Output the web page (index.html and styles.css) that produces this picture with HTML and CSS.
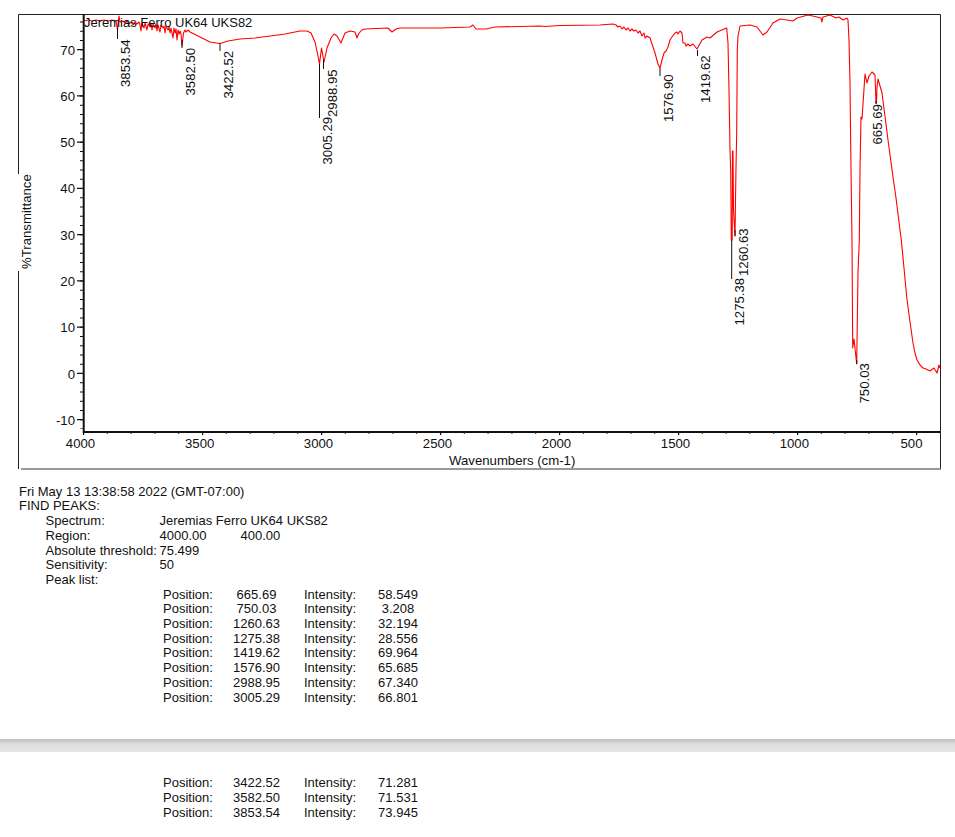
FILE: index.html
```html
<!DOCTYPE html>
<html lang="en">
<head>
    <meta charset="UTF-8">
    <title>Find Peaks Report</title>
    <link rel="stylesheet" href="styles.css">
</head>
<body>
    <!-- Spectrum plot: 46.25px per 10 %T, 119px per 500 cm-1 -->
    <svg class="chart" width="955" height="480" viewBox="0 0 955 480">
        <path class="frame" d="M18.5 174V14.5H940.5V469"/>
        <path class="frame" d="M18.5 271V469"/>
        <path class="frame-bottom" d="M21 469H941"/>

        <path class="axis" d="M83.7 14V432H940"/>
        <line class="tick-y" x1="81.5" y1="21.4" x2="81.5" y2="429"/>
        <line class="tick-y-major" x1="80" y1="49.1" x2="80" y2="429"/>
        <line class="tick-x" x1="83" y1="433" x2="940" y2="433"/>
        <line class="tick-x-major" x1="83" y1="433.5" x2="940" y2="433.5"/>

        <g class="y-labels">
            <text x="75" y="54.5">70</text>
            <text x="75" y="100.5">60</text>
            <text x="75" y="147">50</text>
            <text x="75" y="193">40</text>
            <text x="75" y="239.5">30</text>
            <text x="75" y="286">20</text>
            <text x="75" y="332">10</text>
            <text x="75" y="378.5">0</text>
            <text x="75" y="425">-10</text>
        </g>
        <g class="x-labels">
            <text x="80.5" y="447.5">4000</text>
            <text x="199.7" y="447.5">3500</text>
            <text x="318.5" y="447.5">3000</text>
            <text x="437.5" y="447.5">2500</text>
            <text x="556.5" y="447.5">2000</text>
            <text x="675.5" y="447.5">1500</text>
            <text x="794.3" y="447.5">1000</text>
            <text x="911.5" y="447.5">500</text>
        </g>
        <text class="label" x="449" y="465">Wavenumbers (cm-1)</text>
        <text class="label" transform="translate(31 269) rotate(-90)">%Transmittance</text>

        <polyline class="trace" points="84,21 88,20 92,21 96,20 100,21 104,20 108,21 112,20 116,21 117.5,30 118.5,20 119,16 120,22 123,21 125,23 127,21 129,24 131,22 133,25 135,22 137,24 139,22 140,25 141,31 142,23 144,28 145,23 147,30 148,24 150,27 151,23 152,30 153,24 155,28 156,24 157,31 158,25 160,32 161,25 163,28 164,26 165,33 166,26 168,30 169,27 170,33 171,28 173,38 174,28 175,33 176,29 177,40 178,30 179,34 180,31 181,34 182,46 183.5,33 185,30 186,32 188,30 190,32 192,33 200,37 210,42 220,43.5 228,41 240,39 255,38 270,36 285,34 300,31 307,31 311,33 315,42 318,56 319.5,64 321.5,48 324,62 327,48 331,38 334,34 337,36 341,43 345,33 350,31 355,32 357,38 358.5,34 361.7,30 365,29 388,28 392,32 396,29 400,28 440,28 470,27 473,25 476,29 480,29 486,29 495,27 540,26 545,26.5 560,25.5 600,25 606,24.5 613,24 616,25 618,27 620,26 622,29 624,27 626,30 628,28 630,31 632,29 634,31 636,30 638,33 640,31 642,36 644,33 645,38 647,36 650,38 655,53 658,64 660,68 662,60 664,53 666,51 668,47 670,40 672,37 675,33 677,32 678,34 680,31 682,33 683,43 685,43 686,46 688,44 690,46 693,44 697,49 702,40 707,37 710,38 717,32 726.7,28 728,43 729,90 730,150 730.7,170 731.3,240 732.2,240 732.5,151 733,151 733.5,210 735,236 735.5,200 736,167 736.7,133 737.3,50 738,36 740,26 750,25 757,27 763,35 767,32 773,23 780,19 787,20 793,21 797,18 808,15 817,17 821,18 822,22 823,17 830,15 836,18 839,17 843,20 847,18 848,20 849,40 850,83 851,170 852,240 852.7,348 854,339 856.7,364 858,273 859.3,240 860,170 861,117 862,119 865,74 867,83 869,76 872,72 875,75 876,103 876.5,103 877,87 878,79 882,93 888,140 893,177 896,198 899,222 901.3,240 904,268 906.7,297 910,322 913,343 915,353 917,360 920,365 923,368 926,369 930,371 934,368 937,373 939,365 940,368"/>

        <path class="peak-tick" d="M117.5 28V39M182 40V48M220 43V51M319.5 64V118M323.5 60V69M660 68V76M697.5 50V56M731.7 240V279M735 230V236M856.7 360V364M876 101V104"/>
        <g class="peak-labels">
            <text transform="translate(130 87) rotate(-90)">3853.54</text>
            <text transform="translate(195 95.5) rotate(-90)">3582.50</text>
            <text transform="translate(232.5 98.5) rotate(-90)">3422.52</text>
            <text transform="translate(332 164.5) rotate(-90)">3005.29</text>
            <text transform="translate(336.5 117) rotate(-90)">2988.95</text>
            <text transform="translate(672.5 122) rotate(-90)">1576.90</text>
            <text transform="translate(710 103) rotate(-90)">1419.62</text>
            <text transform="translate(743.5 325.5) rotate(-90)">1275.38</text>
            <text transform="translate(748 276) rotate(-90)">1260.63</text>
            <text transform="translate(869 403.5) rotate(-90)">750.03</text>
            <text transform="translate(881.5 144.5) rotate(-90)">665.69</text>
        </g>
        <text class="title" x="84" y="27">Jeremias Ferro UK64 UKS82</text>
    </svg>

    <section class="report">
        <p>Fri May 13 13:38:58 2022 (GMT-07:00)</p>
        <p>FIND PEAKS:</p>
        <div class="meta">
            <span>Spectrum:</span><span>Jeremias Ferro UK64 UKS82</span>
            <span>Region:</span><span class="region"><span>4000.00</span><span>400.00</span></span>
            <span>Absolute threshold:</span><span>75.499</span>
            <span>Sensitivity:</span><span>50</span>
            <span>Peak list:</span><span></span>
        </div>
        <div class="peaks">
            <span>Position:</span><span>665.69</span><span>Intensity:</span><span>58.549</span>
            <span>Position:</span><span>750.03</span><span>Intensity:</span><span>3.208</span>
            <span>Position:</span><span>1260.63</span><span>Intensity:</span><span>32.194</span>
            <span>Position:</span><span>1275.38</span><span>Intensity:</span><span>28.556</span>
            <span>Position:</span><span>1419.62</span><span>Intensity:</span><span>69.964</span>
            <span>Position:</span><span>1576.90</span><span>Intensity:</span><span>65.685</span>
            <span>Position:</span><span>2988.95</span><span>Intensity:</span><span>67.340</span>
            <span>Position:</span><span>3005.29</span><span>Intensity:</span><span>66.801</span>
        </div>
    </section>

    <div class="page-gap"></div>

    <section class="report">
        <div class="peaks">
            <span>Position:</span><span>3422.52</span><span>Intensity:</span><span>71.281</span>
            <span>Position:</span><span>3582.50</span><span>Intensity:</span><span>71.531</span>
            <span>Position:</span><span>3853.54</span><span>Intensity:</span><span>73.945</span>
        </div>
    </section>
</body>
</html>
```

FILE: styles.css
```css
* {
    box-sizing: border-box;
    margin: 0;
    padding: 0;
}

body {
    background: white;
    color: #111;
    font-family: "Liberation Sans", Arial, sans-serif;
    font-size: 13px;
    line-height: 14.7px;
}

.chart {
    display: block;
    margin-bottom: 4.7px;
}

.chart text {
    font-size: 13.2px;
    fill: #111;
}

.chart .title {
    font-size: 13px;
}

.frame {
    fill: none;
    stroke: #222;
    stroke-width: 1;
}

.frame-bottom {
    fill: none;
    stroke: #777;
    stroke-width: 1.6;
}

.axis {
    fill: none;
    stroke: #111;
    stroke-width: 2;
}

.tick-y {
    stroke: #111;
    stroke-width: 3;
    stroke-dasharray: 1.2 8.05;
}

.tick-y-major {
    stroke: #111;
    stroke-width: 6;
    stroke-dasharray: 1.2 45.05;
}

.tick-x {
    stroke: #222;
    stroke-width: 2;
    stroke-dasharray: 1 22.8;
}

.tick-x-major {
    stroke: #111;
    stroke-width: 3;
    stroke-dasharray: 1.2 117.8;
}

.y-labels text {
    text-anchor: end;
}

.x-labels text {
    text-anchor: middle;
}

.trace {
    fill: none;
    stroke: #f00;
    stroke-width: 1.1;
    stroke-linejoin: round;
}

.peak-tick {
    fill: none;
    stroke: #111;
    stroke-width: 1;
}

.report {
    padding-left: 19px;
}

.meta {
    display: grid;
    grid-template-columns: 114px auto;
    padding-left: 26.5px;
}

.region {
    display: flex;
}

.region span:first-child {
    width: 81px;
}

.peaks {
    display: grid;
    grid-template-columns: 70px 47px 94px 48px;
    padding-left: 144px;
}

.peaks span:nth-child(2n) {
    text-align: center;
    white-space: nowrap;
}

.peaks span:nth-child(4n + 3) {
    padding-left: 24px;
    white-space: nowrap;
}

.page-gap {
    height: 13px;
    margin: 34px 0 24px;
    background: linear-gradient(to bottom, #bdbdbd, #dcdcdc 35%, #e6e6e6);
}
```
